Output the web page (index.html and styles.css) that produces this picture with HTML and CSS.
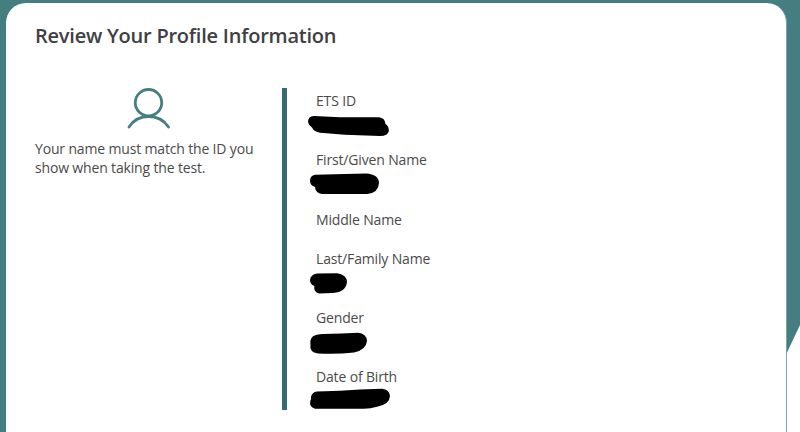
FILE: index.html
```
<!DOCTYPE html>
<html lang="en">
<head>
    <meta charset="UTF-8">
    <meta name="viewport" content="width=device-width, initial-scale=1.0">
    <title>Review Your Profile Information</title>
    <link rel="stylesheet" href="styles.css">
</head>
<body>
    <!-- White corner behind the card -->
    <svg class="corner" width="13" height="107" viewBox="0 0 13 107">
        <path d="M13 0V107H0V27.5Z" fill="#fff"/>
    </svg>

    <main class="card">
        <h1>Review Your Profile Information</h1>

        <div class="profile">
            <section class="notice">
                <svg class="person" width="44" height="42" viewBox="0 0 44 42" fill="none" stroke="#457e81" stroke-width="2.8" stroke-linecap="round">
                    <circle cx="21.500" cy="14.700" r="13.2"/>
                    <path d="M2 39C11 25 32 25 41.500 39"/>
                </svg>
                <p>Your name must match the ID you show when taking the test.</p>
            </section>

            <dl class="details">
                <div class="field">
                    <dt>ETS ID</dt>
                    <dd><svg viewBox="308 111 84 20" width="84" height="20"><path d="M314 116Q308 116 308 122Q309 126 312 127.500Q314 132 320 132.700L345 134.700L380 136Q388 136 388.800 131Q389 126 385.500 124Q385 118 379 117.300L340 117.300Z"/></svg></dd>
                </div>
                <div class="field">
                    <dt>First/Given Name</dt>
                    <dd><svg viewBox="308 170 84 20" width="84" height="20"><path d="M315 174.700L345 174L366 173.600Q378.800 174.500 379 183Q378.500 193 367 194L322 194Q315.500 193 315 187Q310 185.500 310 181Q310 175.500 315 174.700Z"/></svg></dd>
                </div>
                <div class="field empty">
                    <dt>Middle Name</dt>
                </div>
                <div class="field">
                    <dt>Last/Family Name</dt>
                    <dd><svg viewBox="308 269 84 20" width="84" height="20"><path d="M317 273.500L337 273.300Q346.500 274.500 347 282Q346 292 333 293L319 293.500Q313.500 292 314.300 286Q310 284.500 310 280Q310.500 274.500 317 273.500Z"/></svg></dd>
                </div>
                <div class="field">
                    <dt>Gender</dt>
                    <dd><svg viewBox="308 328 84 20" width="84" height="20"><path d="M323 334L342 333.600L358 332.800Q366.500 333.500 367 341Q366 350 354 352.500Q337 354.500 318 353.500Q309 352 310.500 344.500Q309 337 316 335Q320 334 323 334Z"/></svg></dd>
                </div>
                <div class="field">
                    <dt>Date of Birth</dt>
                    <dd><svg viewBox="308 387 84 20" width="84" height="20"><path d="M317 391.500L340 390.700L360 389.500L382 388.700Q389.500 389.500 390 396Q389.500 404 378 406.500Q370 408.700 364 408.700L315 408.700Q309 407 310.300 401Q311.500 399 311 397Q312 392 317 391.500Z"/></svg></dd>
                </div>
            </dl>
        </div>
    </main>
</body>
</html>
```
FILE: styles.css
```
* {
    box-sizing: border-box;
}

body {
    margin: 0;
    padding: 3px 13px 0 6px;
    height: 432px;
    overflow: hidden;
    background-color: #457e81;
    color: #4a4a4a;
    font-family: "Open Sans", "Noto Sans", sans-serif;
    font-size: 14px;
    line-height: 20px;
    letter-spacing: -0.16px;
}

.corner {
    position: absolute;
    right: 0;
    bottom: 0;
}

.card {
    position: relative;
    height: 429px;
    padding: 19px 28px 0 29px;
    background-color: #fff;
    border-right: 1px solid #7ba5a7;
    border-radius: 20px 20px 0 0;
}

h1 {
    margin: 0;
    font-size: 20px;
    font-weight: 600;
    line-height: 28px;
    letter-spacing: -0.23px;
    color: #404044;
}

.profile {
    display: flex;
    margin-top: 38px;
}

.notice {
    width: 247px;
    padding-right: 20px;
}

.person {
    display: block;
    margin: 0 auto;
}

.notice p {
    margin: 9px 0 0;
    line-height: 19px;
}

.details {
    height: 322px;
    margin: 0;
    padding: 3px 0 0 29px;
    border-left: 5px solid #386b6f;
}

.field {
    margin-bottom: 19px;
}

.field.empty {
    padding-top: 1px;
}

/* Redacted value, starts a little left of its label */
.field dd {
    height: 20px;
    margin: 0 0 0 -8px;
}

.field svg {
    display: block;
    overflow: visible;
}
```
